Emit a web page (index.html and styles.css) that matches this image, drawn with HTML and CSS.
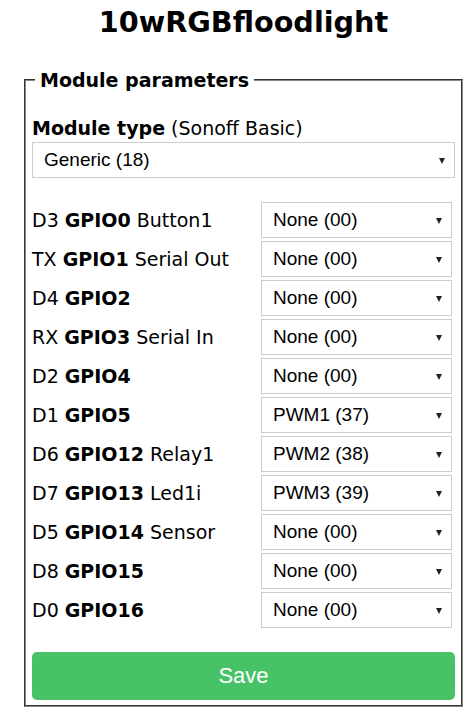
FILE: index.html
```html
<!DOCTYPE html>
<html lang="en">
<head>
  <meta charset="UTF-8">
  <meta name="viewport" content="width=device-width, initial-scale=1.0">
  <title>10wRGBfloodlight - Module</title>
  <link rel="stylesheet" href="styles.css">
</head>
<body>
  <h1>10wRGBfloodlight</h1>
  <fieldset class="params">
    <legend>Module parameters</legend>
    <div class="module-label"><b>Module type</b> (Sonoff Basic)</div>
    <div class="select wide">Generic (18)</div>
    <div class="gpio-list">
      <div class="gpio-row"><span class="pin">D3 <b>GPIO0</b> Button1</span><div class="select">None (00)</div></div>
      <div class="gpio-row"><span class="pin">TX <b>GPIO1</b> Serial Out</span><div class="select">None (00)</div></div>
      <div class="gpio-row"><span class="pin">D4 <b>GPIO2</b></span><div class="select">None (00)</div></div>
      <div class="gpio-row"><span class="pin">RX <b>GPIO3</b> Serial In</span><div class="select">None (00)</div></div>
      <div class="gpio-row"><span class="pin">D2 <b>GPIO4</b></span><div class="select">None (00)</div></div>
      <div class="gpio-row"><span class="pin">D1 <b>GPIO5</b></span><div class="select">PWM1 (37)</div></div>
      <div class="gpio-row"><span class="pin">D6 <b>GPIO12</b> Relay1</span><div class="select">PWM2 (38)</div></div>
      <div class="gpio-row"><span class="pin">D7 <b>GPIO13</b> Led1i</span><div class="select">PWM3 (39)</div></div>
      <div class="gpio-row"><span class="pin">D5 <b>GPIO14</b> Sensor</span><div class="select">None (00)</div></div>
      <div class="gpio-row"><span class="pin">D8 <b>GPIO15</b></span><div class="select">None (00)</div></div>
      <div class="gpio-row"><span class="pin">D0 <b>GPIO16</b></span><div class="select">None (00)</div></div>
    </div>
    <button class="save">Save</button>
  </fieldset>
</body>
</html>
```

FILE: styles.css
```css
* {
  box-sizing: border-box;
}
body {
  margin: 0;
  font-family: "DejaVu Sans", Verdana, sans-serif;
  color: #000;
  background: #fff;
}
h1 {
  margin: 3px 0 0;
  padding-left: 13px;
  text-align: center;
  font-size: 28.7px;
  line-height: 38px;
}
.params {
  margin: 28px 11px 0 24px;
  padding: 10px 6px 5px 6px;
  border: 2px groove #888;
}
.params legend {
  font-weight: bold;
  font-size: 19px;
  padding: 0 5px;
  margin-left: 3px;
}
.module-label {
  font-size: 19px;
  margin-top: 16px;
  line-height: 22px;
}
.select {
  position: relative;
  height: 36px;
  border: 1px solid #ccc;
  background: #fff;
  font-family: "Liberation Sans", Arial, sans-serif;
  font-size: 19px;
  line-height: 34px;
  padding-left: 11px;
}
.select::after {
  content: "";
  position: absolute;
  right: 9px;
  top: 15px;
  border-left: 3px solid transparent;
  border-right: 3px solid transparent;
  border-top: 6px solid #222;
}
.select.wide {
  margin-top: 3px;
}
.gpio-list {
  margin-top: 24px;
  display: flex;
  flex-direction: column;
  gap: 3px;
}
.gpio-row {
  display: flex;
  align-items: center;
  justify-content: space-between;
}
.pin {
  font-size: 19px;
}
.gpio-row .select {
  width: 191px;
  margin-right: 3px;
}
.save {
  display: block;
  width: 100%;
  margin-top: 24px;
  height: 48px;
  border: none;
  border-radius: 5px;
  background: #47c266;
  color: #fff;
  font-family: "Liberation Sans", Arial, sans-serif;
  font-size: 22px;
}
```
